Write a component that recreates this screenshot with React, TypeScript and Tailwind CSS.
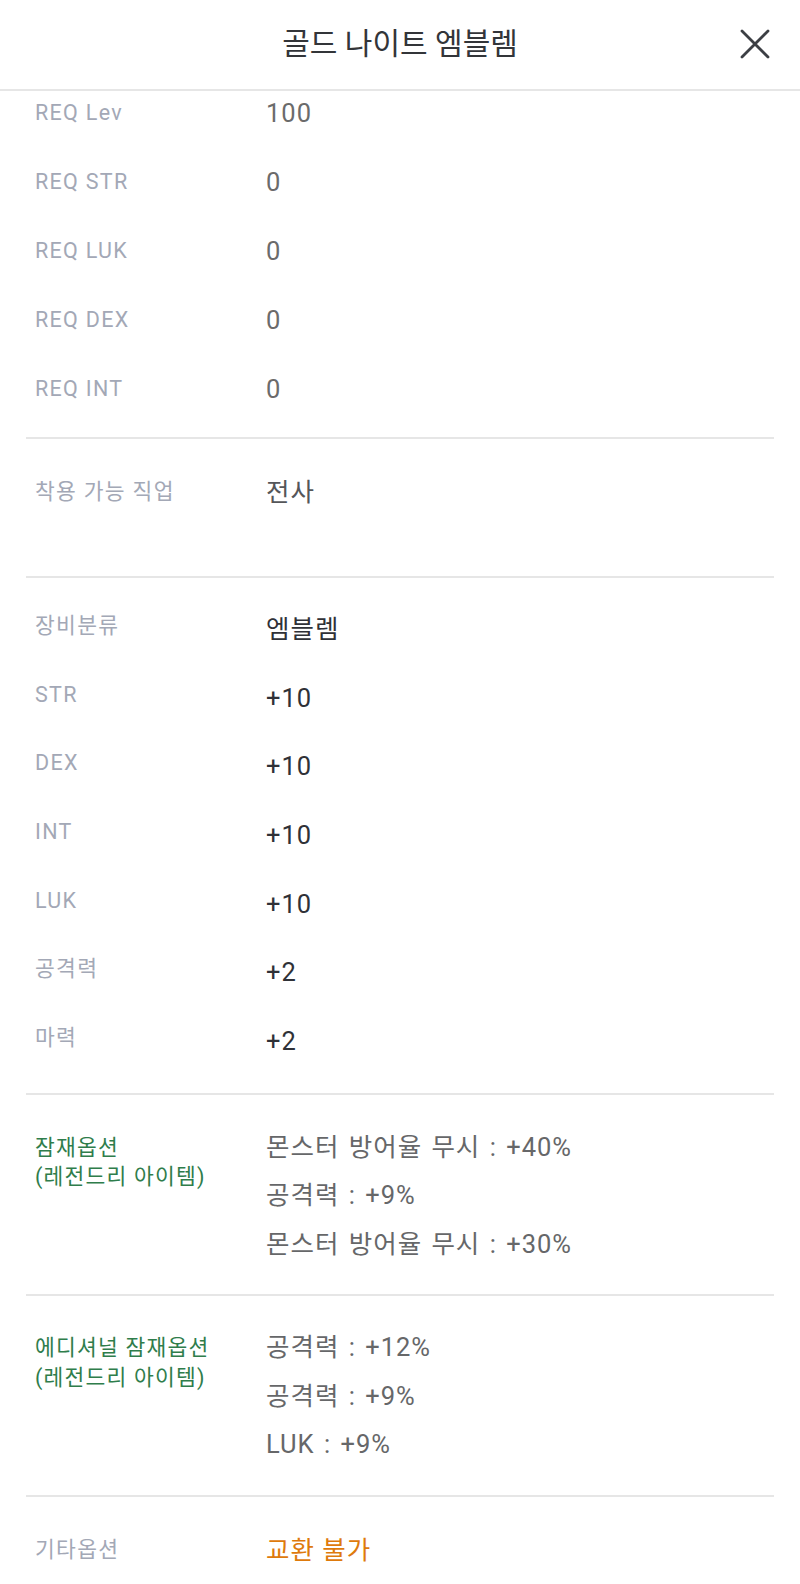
import React from "react";

const FONT = { fontFamily: 'Roboto, "Noto Sans CJK KR", sans-serif' };

export default function App() {
  const req = [
    ["REQ Lev", "100"],
    ["REQ STR", "0"],
    ["REQ LUK", "0"],
    ["REQ DEX", "0"],
    ["REQ INT", "0"],
  ];
  const stats = [
    ["장비분류", "엠블렘"],
    ["STR", "+10"],
    ["DEX", "+10"],
    ["INT", "+10"],
    ["LUK", "+10"],
    ["공격력", "+2"],
    ["마력", "+2"],
  ];
  const labelCls = "w-[240px] shrink-0 pl-[9px] text-[21.5px] leading-[28px] text-[#a3a8b6] tracking-[1.3px]";
  const greenCls = "w-[240px] shrink-0 pl-[9px] text-[21.5px] leading-[29.5px] text-[#2f7d4b] tracking-[1.2px] mt-[10px]";
  const valCls = "text-[25.5px] tracking-[1px]";
  return (
    <div className="w-[800px] h-[1584px] bg-white overflow-hidden" style={FONT}>
      <div className="relative h-[91px] border-b-2 border-[#e6e6e6] flex items-center justify-center">
        <div className="text-[30px] text-[#333539] leading-[40px] -mt-[2px]">골드 나이트 엠블렘</div>
        <svg className="absolute right-[30px] top-[29px]" width="30" height="30" viewBox="0 0 30 30">
          <path d="M2 2 L28 28 M28 2 L2 28" stroke="#3c3f44" strokeWidth="2.8" strokeLinecap="round" />
        </svg>
      </div>
      <div className="px-[26px]">
        <div className="pt-[8px] pb-[34px] border-b-2 border-[#e6e6e6] flex flex-col gap-[41px]">
          {req.map(([l, v]) => (
            <div key={l} className="flex items-center h-[28px]">
              <div className={labelCls}>{l}</div>
              <div className={valCls + " leading-[28px] text-[#6b6b6b]"}>{v}</div>
            </div>
          ))}
        </div>
        <div className="pt-[39px] pb-[70px] border-b-2 border-[#e6e6e6]">
          <div className="flex items-center h-[28px]">
            <div className={labelCls}>착용 가능 직업</div>
            <div className={valCls + " leading-[28px] text-[#555659]"}>전사</div>
          </div>
        </div>
        <div className="pt-[34px] pb-[35px] border-b-2 border-[#e6e6e6] flex flex-col gap-[34.7px]">
          {stats.map(([l, v]) => (
            <div key={l} className="flex items-start h-[34px]">
              <div className={labelCls}>{l}</div>
              <div className={valCls + " leading-[34px] text-[#2f3137]"}>{v}</div>
            </div>
          ))}
        </div>
        <div className="pt-[27.5px] pb-[26px] border-b-2 border-[#e6e6e6] flex items-start">
          <div className={greenCls}>
            <div>잠재옵션</div>
            <div>(레전드리 아이템)</div>
          </div>
          <div className={valCls + " leading-[48.5px] text-[#666769] [word-spacing:2px]"}>
            <div>몬스터 방어율 무시 : +40%</div>
            <div>공격력 : +9%</div>
            <div>몬스터 방어율 무시 : +30%</div>
          </div>
        </div>
        <div className="pt-[27px] pb-[26.5px] border-b-2 border-[#e6e6e6] flex items-start">
          <div className={greenCls}>
            <div>에디셔널 잠재옵션</div>
            <div>(레전드리 아이템)</div>
          </div>
          <div className={valCls + " leading-[48.5px] text-[#666769] [word-spacing:2px]"}>
            <div>공격력 : +12%</div>
            <div>공격력 : +9%</div>
            <div>LUK : +9%</div>
          </div>
        </div>
        <div className="pt-[35.5px]">
          <div className="flex items-center h-[34px]">
            <div className={labelCls}>기타옵션</div>
            <div className={valCls + " leading-[34px] text-[#de7a0c]"}>교환 불가</div>
          </div>
        </div>
      </div>
    </div>
  );
}
